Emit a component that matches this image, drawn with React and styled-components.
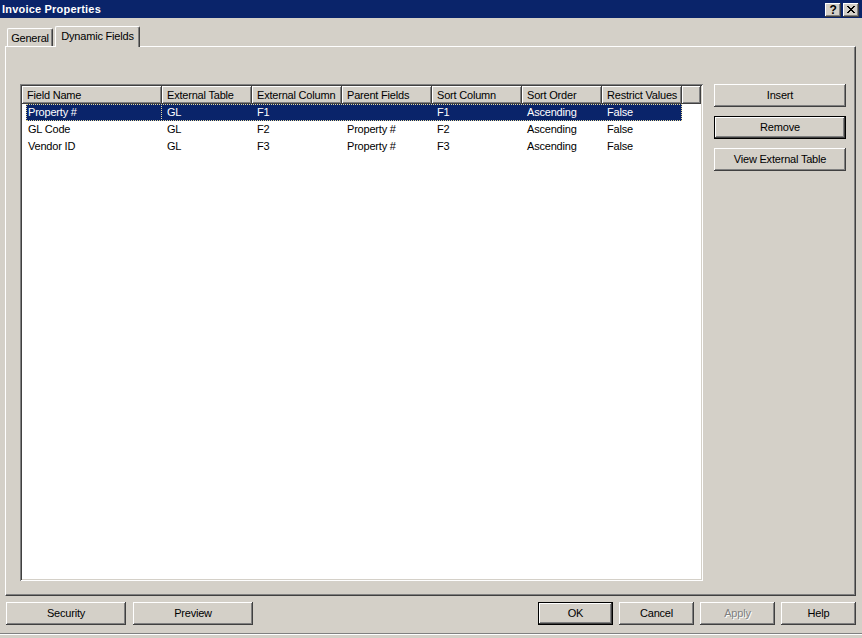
import React from 'react';
import styled, { createGlobalStyle, css } from 'styled-components';

const GlobalStyle = createGlobalStyle`
  html, body {
    margin: 0;
    padding: 0;
    background: #d4d0c8;
  }
  body {
    font-family: "Liberation Sans", Arial, sans-serif;
    font-size: 11px;
    letter-spacing: -0.2px;
    color: #000;
  }
`;

// classic 3d bevels
const raised = css`
  box-shadow: inset -1px -1px #404040, inset 1px 1px #ffffff,
    inset -2px -2px #808080, inset 2px 2px #d4d0c8;
`;

const sunken = css`
  box-shadow: inset 1px 1px #808080, inset -1px -1px #ffffff,
    inset 2px 2px #404040, inset -2px -2px #d4d0c8;
`;

const Window = styled.div`
  width: 862px;
  height: 638px;
  background: #d4d0c8;
  display: flex;
  flex-direction: column;
  overflow: hidden;
`;

const TitleBar = styled.div`
  height: 18px;
  background: #0a246a;
  display: flex;
  align-items: center;
  justify-content: space-between;
  padding: 0 3px 0 2px;
  box-sizing: border-box;
`;

const Title = styled.span`
  color: #fff;
  font-weight: bold;
  font-size: 11px;
  letter-spacing: 0.2px;
`;

const TitleButtons = styled.div`
  display: flex;
  gap: 2px;
  padding-top: 1px;
`;

const TitleButton = styled.div`
  width: 16px;
  height: 14px;
  background: #d4d0c8;
  ${raised};
  display: flex;
  align-items: center;
  justify-content: center;
  font-weight: bold;
  font-size: 12px;
  line-height: 1;
`;

const TabStrip = styled.div`
  display: flex;
  align-items: flex-end;
  height: 20px;
  margin-top: 8px;
  padding-left: 7px;
  gap: 2px;
  position: relative;
  z-index: 1;
`;

const Tab = styled.div`
  width: ${p => p.$w}px;
  height: ${p => (p.$active ? '21px' : '18px')};
  margin-bottom: ${p => (p.$active ? '-1px' : '0')};
  padding-top: ${p => (p.$active ? '3px' : '3px')};
  box-sizing: border-box;
  text-align: center;
  background: #d4d0c8;
  border-top: 1px solid #fff;
  border-left: 1px solid #fff;
  border-right: 1px solid #404040;
  border-top-left-radius: 2px;
  border-top-right-radius: 2px;
  box-shadow: inset -1px 0 #808080;
  white-space: nowrap;
`;

const Pane = styled.div`
  margin: 0 6px 0 5px;
  height: 550px;
  box-sizing: border-box;
  border-top: 1px solid #fff;
  border-left: 1px solid #fff;
  border-right: 1px solid #404040;
  border-bottom: 1px solid #404040;
  box-shadow: inset -1px -1px #808080;
  padding: 37px 0 0 14px;
  display: flex;
  align-items: flex-start;
  gap: 11px;
`;

const Grid = styled.div`
  width: 683px;
  height: 497px;
  box-sizing: border-box;
  background: #fff;
  padding: 2px;
  ${sunken};
  overflow: hidden;
`;

const HeaderRow = styled.div`
  display: flex;
  height: 18px;
`;

const HeaderCell = styled.div`
  width: ${p => (p.$w ? `${p.$w}px` : 'auto')};
  flex: ${p => (p.$w ? 'none' : '1')};
  box-sizing: border-box;
  background: #d4d0c8;
  ${raised};
  padding: 3px 0 0 5px;
  white-space: nowrap;
  overflow: hidden;
`;

const Row = styled.div`
  display: flex;
  height: 17px;
  margin-left: 4px;
  width: fit-content;
  background: ${p => (p.$selected ? '#0a246a' : 'transparent')};
  color: ${p => (p.$selected ? '#fff' : '#000')};
  outline: ${p => (p.$selected ? '1px dotted #e8dc9c' : 'none')};
  outline-offset: -1px;
`;

const Cell = styled.div`
  width: ${p => p.$w}px;
  box-sizing: border-box;
  padding: 2px 0 0 ${p => (p.$first ? 2 : 5)}px;
  white-space: nowrap;
  overflow: hidden;
  border-right: ${p => (p.$first && p.$selected ? '1px dotted #e8dc9c' : 'none')};
`;

const SideButtons = styled.div`
  display: flex;
  flex-direction: column;
  gap: 9px;
  width: 132px;
`;

const Button = styled.div`
  width: ${p => (p.$w ? `${p.$w}px` : '100%')};
  height: 23px;
  box-sizing: border-box;
  background: #d4d0c8;
  display: flex;
  align-items: center;
  justify-content: center;
  padding-bottom: 1px;
  color: ${p => (p.$disabled ? '#808080' : '#000')};
  text-shadow: ${p => (p.$disabled ? '1px 1px #ffffff' : 'none')};
  ${p =>
    p.$default
      ? css`
          border: 1px solid #000;
          box-shadow: inset -1px -1px #404040, inset 1px 1px #ffffff,
            inset -2px -2px #808080;
        `
      : raised};
`;

const BottomBar = styled.div`
  display: flex;
  align-items: center;
  margin-top: 6px;
  padding: 0 6px;
  gap: 7px;
`;

const Spacer = styled.div`
  flex: 1;
`;

const DialogButtons = styled.div`
  display: flex;
  gap: 6px;
`;

const Separator = styled.div`
  margin-top: 8px;
  border-top: 1px solid #808080;
  border-bottom: 1px solid #ffffff;
`;

const columns = [
  { name: 'Field Name', w: 136, hw: 140 },
  { name: 'External Table', w: 90, hw: 90 },
  { name: 'External Column', w: 90, hw: 90 },
  { name: 'Parent Fields', w: 90, hw: 90 },
  { name: 'Sort Column', w: 90, hw: 90 },
  { name: 'Sort Order', w: 80, hw: 80 },
  { name: 'Restrict Values', w: 80, hw: 80 },
];

const rows = [
  ['Property #', 'GL', 'F1', '', 'F1', 'Ascending', 'False'],
  ['GL Code', 'GL', 'F2', 'Property #', 'F2', 'Ascending', 'False'],
  ['Vendor ID', 'GL', 'F3', 'Property #', 'F3', 'Ascending', 'False'],
];

const CloseIcon = () => (
  <svg width="8" height="7" viewBox="0 0 8 7" shapeRendering="crispEdges">
    <path
      d="M0 0h2v1h1v1h2v-1h1v-1h2v1h-1v1h-1v1h-1v1h1v1h1v1h1v1h-2v-1h-1v-1h-2v1h-1v1h-2v-1h1v-1h1v-1h1v-1h-1v-1h-1v-1h-1z"
      fill="#000"
    />
  </svg>
);

export default function App() {
  return (
    <>
      <GlobalStyle />
      <Window>
        <TitleBar>
          <Title>Invoice Properties</Title>
          <TitleButtons>
            <TitleButton>?</TitleButton>
            <TitleButton>
              <CloseIcon />
            </TitleButton>
          </TitleButtons>
        </TitleBar>

        <TabStrip>
          <Tab $w={46}>General</Tab>
          <Tab $w={85} $active>Dynamic Fields</Tab>
        </TabStrip>

        <Pane>
          <Grid>
            <HeaderRow>
              {columns.map(c => (
                <HeaderCell key={c.name} $w={c.hw}>
                  {c.name}
                </HeaderCell>
              ))}
              <HeaderCell />
            </HeaderRow>
            {rows.map((r, i) => (
              <Row key={i} $selected={i === 0}>
                {r.map((v, j) => (
                  <Cell
                    key={j}
                    $w={columns[j].w}
                    $first={j === 0}
                    $selected={i === 0}
                  >
                    {v}
                  </Cell>
                ))}
              </Row>
            ))}
          </Grid>

          <SideButtons>
            <Button>Insert</Button>
            <Button $default>Remove</Button>
            <Button>View External Table</Button>
          </SideButtons>
        </Pane>

        <BottomBar>
          <Button $w={120}>Security</Button>
          <Button $w={120}>Preview</Button>
          <Spacer />
          <DialogButtons>
            <Button $w={75} $default>OK</Button>
            <Button $w={75}>Cancel</Button>
            <Button $w={75} $disabled>Apply</Button>
            <Button $w={75}>Help</Button>
          </DialogButtons>
        </BottomBar>
        <Separator />
      </Window>
    </>
  );
}
